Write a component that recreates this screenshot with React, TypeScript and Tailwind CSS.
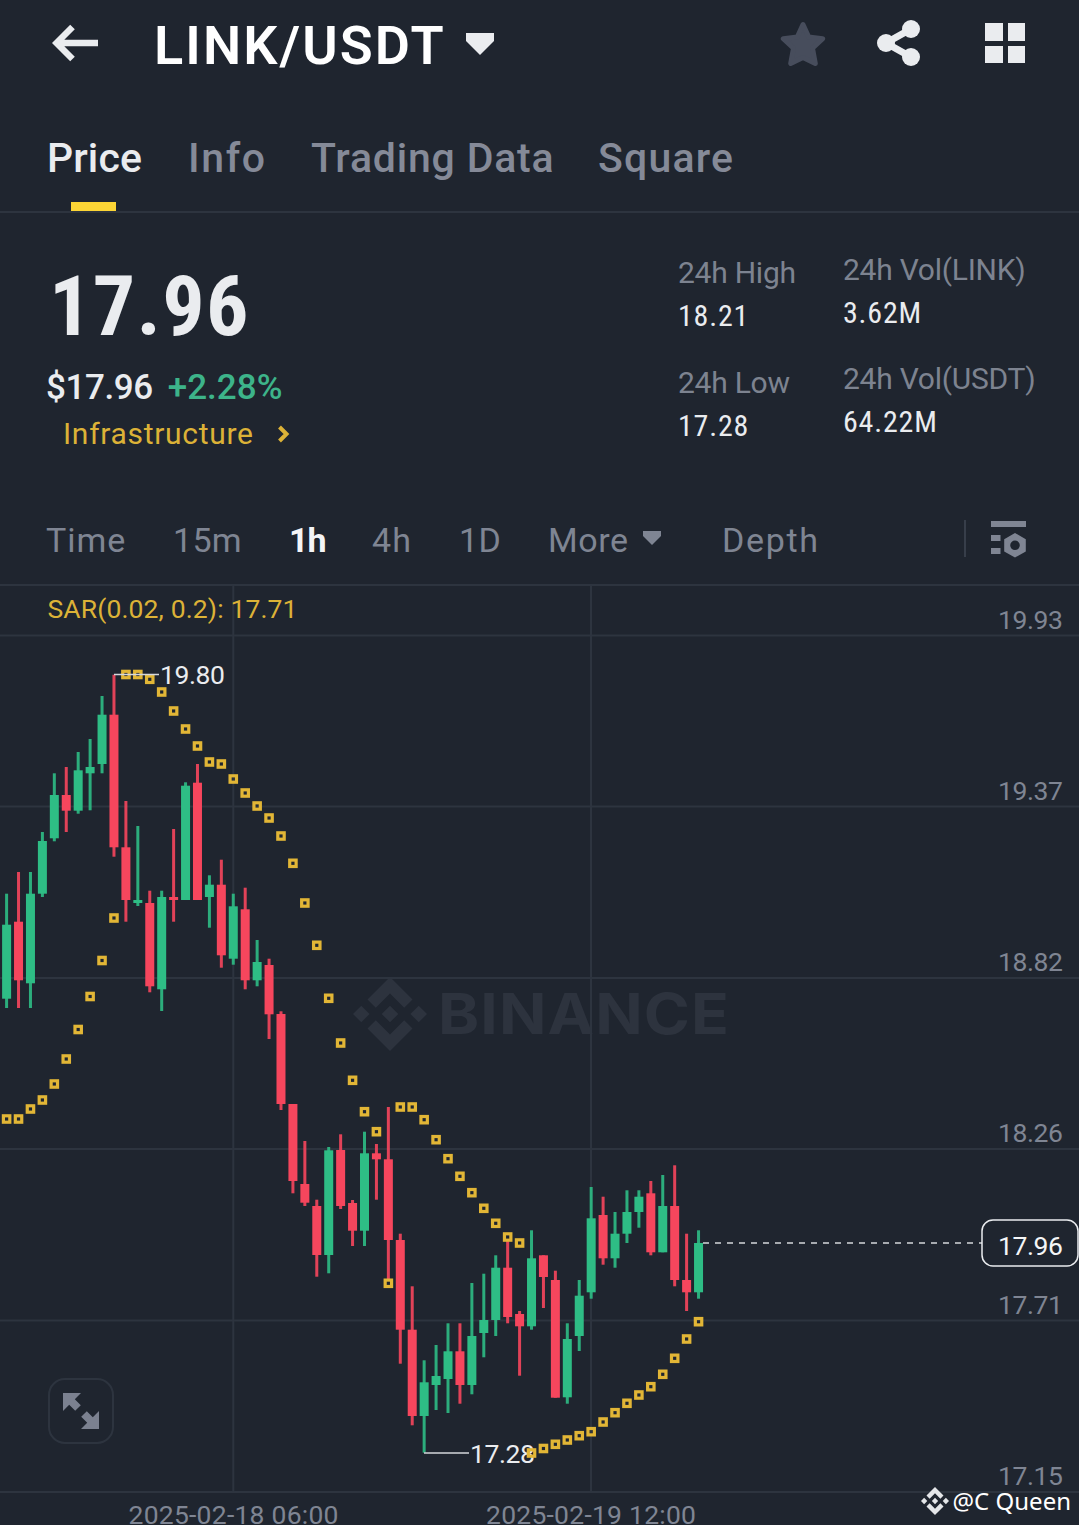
interface Candle {
    up: boolean;
    high: number;
    top: number;
    bottom: number;
    low: number;
}

const UP = '#2ebd85';
const DOWN = '#f6465d';
const STEP = 11.93;
const FIRST_X = 6.6;

const c = (dir: 'g' | 'r', high: number, top: number, bottom: number, low: number): Candle => ({
    up: dir === 'g',
    high,
    top,
    bottom,
    low,
});

// y positions on the chart canvas, one candle per hour
const candles: Candle[] = [
    c('g', 893.7, 924.7, 998.7, 1008),
    c('r', 872, 921.7, 980.3, 1008),
    c('g', 872, 893.7, 983.3, 1008),
    c('g', 832, 841, 893.7, 897),
    c('g', 773.3, 795, 838.3, 841.3),
    c('r', 767, 795, 810.7, 832),
    c('g', 752, 770.3, 810.7, 813.7),
    c('g', 739, 767, 773.3, 810.3),
    c('g', 696, 714.7, 764, 773.3),
    c('r', 674.7, 714.7, 847.3, 856.7),
    c('r', 801, 847.3, 900, 921.7),
    c('g', 826, 900, 903, 906),
    c('r', 890.7, 903, 986.3, 992.3),
    c('g', 890.7, 897, 989.3, 1011),
    c('r', 829, 897, 900, 921.7),
    c('g', 782.3, 785.7, 900, 900),
    c('r', 764, 782.7, 900, 900),
    c('g', 875.3, 884.7, 897, 927.7),
    c('r', 859.7, 884.7, 955.3, 967.7),
    c('g', 893.7, 906.3, 958.7, 964.7),
    c('r', 887.7, 909.3, 980.3, 989.3),
    c('g', 940, 962, 980.3, 986.3),
    c('r', 958.7, 965, 1014.3, 1039),
    c('r', 1011.3, 1014, 1104, 1110),
    c('r', 1104, 1104, 1181, 1193.3),
    c('r', 1141, 1184, 1202.7, 1206),
    c('r', 1199.7, 1206, 1255, 1276.7),
    c('g', 1147, 1150.3, 1255, 1273.3),
    c('r', 1134.3, 1150, 1206, 1209),
    c('r', 1200, 1203, 1230.7, 1246),
    c('g', 1131.7, 1153.3, 1230.7, 1246),
    c('r', 1144, 1153.3, 1159.3, 1199.7),
    c('r', 1107, 1159.3, 1240, 1280),
    c('r', 1233.7, 1240, 1329.7, 1363.7),
    c('r', 1286.3, 1329.7, 1416, 1425.3),
    c('g', 1360.3, 1382.3, 1416, 1452.7),
    c('g', 1345, 1376, 1385, 1410),
    c('g', 1323.3, 1351.3, 1379, 1413),
    c('r', 1323.3, 1351.3, 1385, 1403.7),
    c('g', 1283, 1336, 1385, 1394.3),
    c('g', 1273.7, 1320, 1333, 1357.3),
    c('g', 1255.3, 1267.7, 1320, 1336),
    c('r', 1240, 1267.7, 1317, 1323.3),
    c('r', 1311, 1314, 1326.3, 1375.7),
    c('g', 1230.3, 1258.3, 1326.3, 1329.7),
    c('r', 1255.3, 1255.3, 1277, 1308),
    c('r', 1270.7, 1280, 1397.7, 1397.7),
    c('g', 1323.3, 1339, 1397.3, 1403.7),
    c('g', 1280, 1295.7, 1336, 1351),
    c('g', 1187, 1218.3, 1292.3, 1298.7),
    c('r', 1196.7, 1215, 1258.3, 1264.7),
    c('g', 1212, 1233.7, 1258.3, 1267.7),
    c('g', 1190.3, 1212, 1233.7, 1243),
    c('g', 1190.3, 1196.7, 1212, 1227.7),
    c('r', 1181, 1193.3, 1252.3, 1255.3),
    c('g', 1175, 1206, 1252.3, 1252.3),
    c('r', 1165.3, 1206, 1280, 1286.3),
    c('r', 1233.7, 1280, 1292.3, 1311),
    c('g', 1230.3, 1243, 1292.3, 1298.7),
];

const sar = [
    1119, 1119, 1109, 1100, 1084, 1059, 1029.5, 996.5, 960.5, 918, 674.5, 674.5, 679.3, 692, 711, 729, 746, 762,
    764, 779, 793, 806, 818, 836, 863.3, 903, 945.3, 998.3, 1043, 1080.3, 1111.7, 1131.7, 1283.3, 1107, 1107,
    1119.7, 1139.7, 1158.7, 1176.3, 1192.7, 1208.3, 1223.3, 1237, 1243, 1453, 1448.5, 1444.3, 1440, 1435.7,
    1431.7, 1422, 1412.7, 1403.3, 1395, 1386.7, 1374.3, 1358.3, 1339, 1321.7,
];

const gridRows = [
    { y: 635.5, label: '19.93' },
    { y: 806.5, label: '19.37' },
    { y: 978, label: '18.82' },
    { y: 1149, label: '18.26' },
    { y: 1320.5, label: '17.71' },
    { y: 1492, label: '17.15' },
];

const tabs = [
    { label: 'Price', className: 'w-[141px] tracking-[0.1px] text-[#eaecef]', active: true },
    { label: 'Info', className: 'w-[123px] tracking-[1.6px] text-[#858a98]' },
    { label: 'Trading Data', className: 'w-[287px] tracking-[0.8px] text-[#858a98]' },
    { label: 'Square', className: 'tracking-[1.2px] text-[#858a98]' },
];

const intervals = [
    { label: 'Time', className: 'w-[127px] tracking-[1px]' },
    { label: '15m', className: 'w-[116px] tracking-[0.3px]' },
    { label: '1h', className: 'w-[83px] font-bold text-[#f4f5f7] tracking-[-1px]' },
    { label: '4h', className: 'w-[87px] tracking-[1.2px]' },
    { label: '1D', className: 'w-[89px] tracking-[0.3px]' },
    { label: 'More', className: 'w-[174px] tracking-[0.6px]', caret: true },
    { label: 'Depth', className: 'tracking-[1.7px]' },
];

function BinanceMark({ className }: { className: string }) {
    return (
        <svg className={className} viewBox="0 0 74 74" fill="currentColor">
            <BinanceShapes />
        </svg>
    );
}

function BinanceShapes() {
    return (
        <>
            <path d="M37 0l22.5 22.5-8.3 8.3L37 16.6 22.8 30.8 14.5 22.5z" />
            <path d="M37 74l22.5-22.5-8.3-8.3L37 57.4 22.8 43.2l-8.3 8.3z" />
            <path d="M37 28.7l8.3 8.3-8.3 8.3-8.3-8.3z" />
            <path d="M8.3 28.7l8.3 8.3-8.3 8.3L0 37z" />
            <path d="M65.7 28.7L74 37l-8.3 8.3-8.3-8.3z" />
        </>
    );
}

function Header() {
    return (
        <header className="flex h-[91px] items-center pl-[52px] text-[#eaecef]">
            <svg className="mb-[5px] h-[38px] w-[46px]" viewBox="0 0 46 38" fill="none" stroke="currentColor" strokeWidth="6.5">
                <path d="M5 19h41M20.5 3L4.5 19l16 16" />
            </svg>
            <h1 className="ml-[56px] w-[312px] text-[54px] leading-none font-semibold tracking-[2.1px] whitespace-nowrap text-white">
                LINK/USDT
            </h1>
            <svg className="mb-[3px] h-[22px] w-[28px]" viewBox="0 0 28 22" fill="currentColor">
                <path d="M0 0h28v8L14 22 0 8z" />
            </svg>
            <svg className="mb-[3px] ml-[286px] h-[46px] w-[46px] text-[#474d5c]" viewBox="0 0 46 46" fill="currentColor">
                <path
                    d="M23 3.5l5.7 12.5 14 1.7-10.2 9.5 2.8 15.3L23 36.5l-12.3 6 2.8-15.3L3.3 17.7l14-1.7z"
                    stroke="currentColor"
                    strokeWidth="5"
                    strokeLinejoin="round"
                />
            </svg>
            <svg className="mb-[5px] ml-[51px] h-[46px] w-[43px]" viewBox="0 0 43 46" fill="currentColor">
                <path d="M34 9L9 23l25 14" fill="none" stroke="currentColor" strokeWidth="7" />
                <circle cx="34" cy="9" r="9" />
                <circle cx="9" cy="23" r="9" />
                <circle cx="34" cy="37" r="9" />
            </svg>
            <div className="mb-[5px] ml-[65px] grid size-[40px] grid-cols-2 gap-[5px]">
                <span className="bg-current" />
                <span className="bg-current" />
                <span className="bg-current" />
                <span className="bg-current" />
            </div>
        </header>
    );
}

function Tabs() {
    return (
        <nav className="flex h-[122px] border-b-2 border-[#2d343f] pt-[47px] pl-[47px] text-[41px] leading-none font-medium">
            {tabs.map(tab => (
                <div key={tab.label} className={tab.className}>
                    <div className="inline-flex flex-col items-center whitespace-nowrap">
                        {tab.label}
                        {tab.active && <span className="mt-[23px] mr-[2px] h-[9px] w-[45px] bg-[#fcd535]" />}
                    </div>
                </div>
            ))}
        </nav>
    );
}

function Stat({ label, value }: { label: string; value: string }) {
    return (
        <div className="whitespace-nowrap">
            <div className="tracking-[-0.25px] text-[#7d8390]">{label}</div>
            <div className="mt-[13px] tracking-[0.8px] text-[#eaecef] [font-stretch:87.5%]">{value}</div>
        </div>
    );
}

function Ticker() {
    return (
        <section className="flex h-[310px] text-[30px] leading-none">
            <div className="w-[678px] pt-[52px] pl-[46px]">
                <div className="pl-[3px] text-[84px] leading-none font-bold tracking-[1.3px] text-[#eaecef] [font-stretch:75%]">
                    17.96
                </div>
                <div className="mt-[21px] flex gap-[15px] text-[35px] leading-none font-medium">
                    <span className="tracking-[-0.4px] text-[#eaecef]">$17.96</span>
                    <span className="text-[#3db48a]">+2.28%</span>
                </div>
                <div className="mt-[14px] flex items-center pl-[17px] tracking-[0.7px] text-[#dcb237]">
                    Infrastructure
                    <svg className="ml-[24px] h-[18px] w-[12px]" viewBox="0 0 12 18" fill="none" stroke="currentColor" strokeWidth="4">
                        <path d="M1.5 2l7 7-7 7" />
                    </svg>
                </div>
            </div>
            <div className="flex w-[165px] flex-col gap-[37px] pt-[45px]">
                <Stat label="24h High" value="18.21" />
                <Stat label="24h Low" value="17.28" />
            </div>
            <div className="flex flex-col gap-[36px] pt-[42px]">
                <Stat label="24h Vol(LINK)" value="3.62M" />
                <Stat label="24h Vol(USDT)" value="64.22M" />
            </div>
        </section>
    );
}

function IntervalBar() {
    return (
        <div className="flex h-[61px] pl-[46px] text-[34px] leading-none text-[#7f8593]">
            {intervals.map(item => (
                <div key={item.label} className={`flex ${item.className}`}>
                    {item.label}
                    {item.caret && (
                        <svg className="mt-[8px] ml-[14px] h-[14px] w-[18px]" viewBox="0 0 18 14" fill="currentColor">
                            <path d="M0 0h18v5l-9 9-9-9z" />
                        </svg>
                    )}
                </div>
            ))}
            <div className="-mt-[3px] mr-[53px] ml-auto flex">
                <span className="h-[37px] w-[2px] bg-[#373e4a]" />
                <svg className="mt-px ml-[25px] h-[37px] w-[35px]" viewBox="0 0 35 37" fill="currentColor">
                    <path d="M0 0h35v6H0zM0 14h9.5v6H0zM0 27h9.5v6H0z" />
                    <path
                        fillRule="evenodd"
                        d="M24 12l10.8 6.2v12.2L24 36.5l-10.8-6.1V18.2zM24 19.5a4.8 4.8 0 100 9.6 4.8 4.8 0 000-9.6z"
                    />
                </svg>
            </div>
        </div>
    );
}

function Chart() {
    return (
        <div className="relative h-[941px] overflow-hidden">
            <svg className="block h-[941px] w-[1079px]" viewBox="0 584 1079 941" fontSize="26.5">
                <g fill="#2d333e">
                    <svg x="353" y="977" width="74" height="74" viewBox="0 0 74 74">
                        <BinanceShapes />
                    </svg>
                    <text
                        x="438"
                        y="1034"
                        fontSize="57"
                        textLength="292"
                        lengthAdjust="spacingAndGlyphs"
                        className="font-['Inter'] font-bold tracking-[1px]"
                    >
                        BINANCE
                    </text>
                </g>
                <g stroke="#2d343f" strokeWidth="2">
                    <line x1="0" x2="1079" y1="585" y2="585" />
                    {gridRows.map(row => (
                        <line key={row.label} x1="0" x2="1079" y1={row.y} y2={row.y} />
                    ))}
                    <line x1="233.3" x2="233.3" y1="585" y2="1492" />
                    <line x1="591" x2="591" y1="585" y2="1492" />
                </g>
                {candles.map((candle, i) => {
                    const x = FIRST_X + i * STEP;
                    return (
                        <g key={i} fill={candle.up ? UP : DOWN}>
                            <rect x={x - 1.5} y={candle.high} width="3" height={candle.low - candle.high} opacity="0.9" />
                            <rect x={x - 4.5} y={candle.top} width="9" height={candle.bottom - candle.top} />
                        </g>
                    );
                })}
                <g fill="#eaecef">
                    <text x="160" y="684" textLength="65">19.80</text>
                    <text x="470" y="1463" textLength="65">17.28</text>
                </g>
                <g fill="none" stroke="#e2b636" strokeWidth="3.2">
                    {sar.map((y, i) => (
                        <rect key={i} x={FIRST_X + i * STEP - 3.2} y={y - 3.2} width="6.4" height="6.4" />
                    ))}
                </g>
                <g stroke="#d5d7db" strokeWidth="1.5">
                    <line x1="114" x2="159" y1="674.5" y2="674.5" />
                    <line x1="424" x2="469" y1="1453" y2="1453" />
                    <line x1="703" x2="982" y1="1243" y2="1243" strokeDasharray="6 6" />
                </g>
                <text x="47.5" y="618" fill="#dcb237" textLength="250">
                    SAR(0.02, 0.2): 17.71
                </text>
                <g fill="#7f8593">
                    {gridRows.map(row => (
                        <text key={row.label} x="998" y={row.y - 6.6} textLength="65">
                            {row.label}
                        </text>
                    ))}
                    <text x="128.5" y="1524" textLength="210">2025-02-18 06:00</text>
                    <text x="486" y="1524" textLength="210">2025-02-19 12:00</text>
                </g>
                <rect x="982" y="1220" width="96" height="46" rx="11" fill="#1f252f" stroke="#eaecef" strokeWidth="1.5" />
                <text x="998" y="1255" fill="#f4f5f7" textLength="65">17.96</text>
            </svg>

            <button className="absolute top-[794px] left-[48px] flex size-[66px] items-center justify-center rounded-[17px] border-2 border-[#2d343f] text-[#7b8190]">
                <svg className="size-[36px]" viewBox="0 0 36 36" fill="currentColor">
                    <path d="M0 0h18l-6.200 6.200 6 6-5.600 5.600-6-6L0 18z" />
                    <path d="M36 36H18l6.200-6.200-6-6 5.600-5.600 6 6L36 18z" />
                </svg>
            </button>

            <div className="absolute right-[8px] bottom-[10px] flex items-center gap-[4px] font-['Noto_Sans'] text-[24px] leading-[28px] text-white">
                <BinanceMark className="size-[28px] text-[#e4e6e9]" />
                <span>@C Queen</span>
            </div>
        </div>
    );
}

export default function App() {
    return (
        <div className="h-[1525px] w-[1079px] overflow-hidden bg-[#1f252f] font-['Roboto','Liberation_Sans',sans-serif]">
            <Header />
            <Tabs />
            <Ticker />
            <IntervalBar />
            <Chart />
        </div>
    );
}
